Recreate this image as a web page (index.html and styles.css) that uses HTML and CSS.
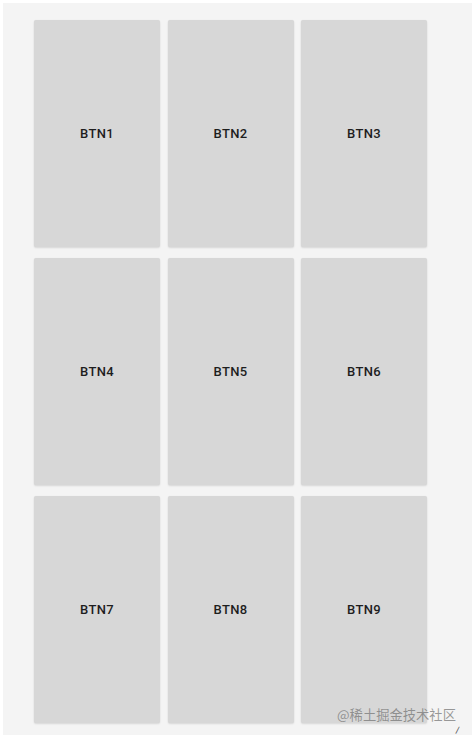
FILE: index.html
```html
<!DOCTYPE html>
<html>
<head>
<meta charset="utf-8">
<link rel="stylesheet" href="styles.css">
</head>
<body>
<div class="panel">
  <div class="grid">
    <button class="btn">BTN1</button>
    <button class="btn">BTN2</button>
    <button class="btn">BTN3</button>
    <button class="btn">BTN4</button>
    <button class="btn">BTN5</button>
    <button class="btn">BTN6</button>
    <button class="btn">BTN7</button>
    <button class="btn">BTN8</button>
    <button class="btn">BTN9</button>
  </div>
  <div class="watermark">@稀土掘金技术社区</div>
  <div class="corner">/</div>
</div>
</body>
</html>
```
FILE: styles.css
```css
html, body {
  margin: 0;
  padding: 0;
  background: #ffffff;
  width: 474px;
  height: 738px;
  overflow: hidden;
}
.panel {
  position: relative;
  margin: 3px 2px 0 3px;
  height: 732px;
  background: #f4f4f4;
  padding: 17px 0 0 31px;
  box-sizing: border-box;
}
.grid {
  display: grid;
  grid-template-columns: 126px 126px 126px;
  grid-template-rows: 227px 227px 227px;
  column-gap: 7.5px;
  row-gap: 11px;
}
.btn {
  border: none;
  border-radius: 2px;
  background: #d7d7d7;
  box-shadow: 0 1px 2px rgba(0,0,0,0.12), 0 0 1px rgba(0,0,0,0.06);
  font-family: Roboto, "Noto Sans", sans-serif;
  font-weight: 500;
  font-size: 13px;
  letter-spacing: 0.3px;
  color: #1e1e1e;
  padding: 0;
  display: flex;
  align-items: center;
  justify-content: center;
}
.watermark {
  position: absolute;
  left: 334px;
  top: 702px;
  font-family: "Noto Sans CJK SC", sans-serif;
  font-size: 13.3px;
  color: rgba(120,120,120,0.75);
}
.corner {
  position: absolute;
  left: 453px;
  top: 722px;
  font-family: "DejaVu Sans", sans-serif;
  font-size: 9px;
  color: #555;
  transform: rotate(10deg);
}
```
